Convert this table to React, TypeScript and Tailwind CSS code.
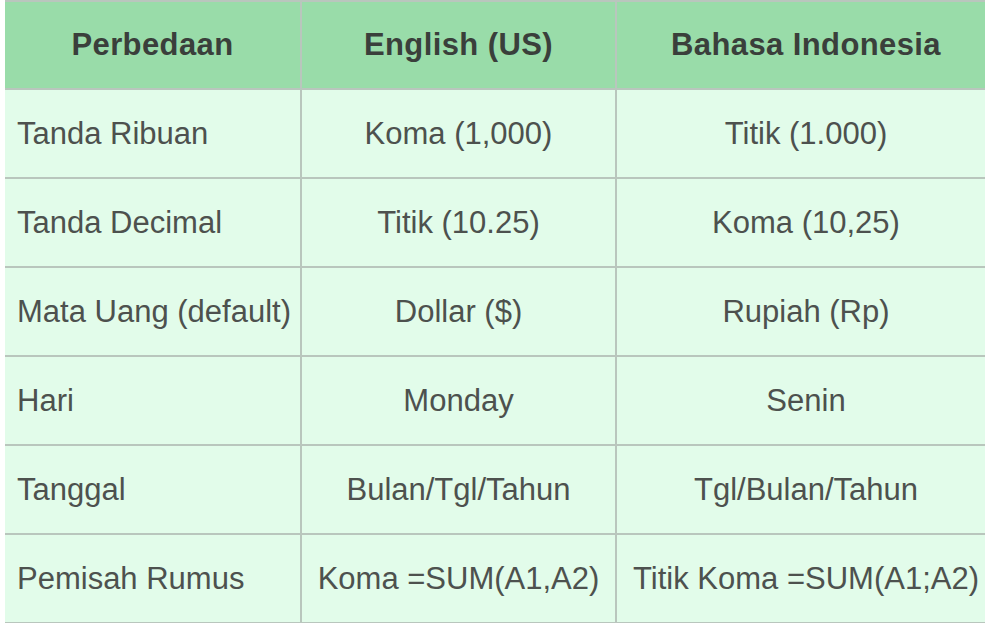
const rows: [string, string, string][] = [
  ["Tanda Ribuan", "Koma (1,000)", "Titik (1.000)"],
  ["Tanda Decimal", "Titik (10.25)", "Koma (10,25)"],
  ["Mata Uang (default)", "Dollar ($)", "Rupiah (Rp)"],
  ["Hari", "Monday", "Senin"],
  ["Tanggal", "Bulan/Tgl/Tahun", "Tgl/Bulan/Tahun"],
  ["Pemisah Rumus", "Koma =SUM(A1,A2)", "Titik Koma =SUM(A1;A2)"],
];

export default function App() {
  return (
    <div className="w-[985px] h-[623px] overflow-hidden bg-white pl-[5px] font-['Liberation_Sans',Arial,sans-serif]">
      <table className="table-fixed border-collapse w-[991px]">
        <colgroup>
          <col className="w-[296px]" />
          <col className="w-[315px]" />
          <col className="w-[380px]" />
        </colgroup>
        <thead>
          <tr className="bg-[#99dca9] h-[88px]">
            {["Perbedaan", "English (US)", "Bahasa Indonesia"].map((h) => (
              <th
                key={h}
                className="border-2 border-l-0 border-[#b9c6bd] text-center font-bold text-[31px] tracking-[0.4px] text-[#3a3f3b] px-3"
              >
                {h}
              </th>
            ))}
          </tr>
        </thead>
        <tbody>
          {rows.map((r) => (
            <tr key={r[0]} className="bg-[#e2fcea] h-[89px]">
              <td className="border-2 border-l-0 border-[#b9c6bd] px-3 pt-[2px] text-left text-[31px] text-[#4d514e] whitespace-nowrap">
                {r[0]}
              </td>
              <td className="border-2 border-[#b9c6bd] px-3 pt-[2px] text-center text-[31px] text-[#4d514e] whitespace-nowrap">
                {r[1]}
              </td>
              <td className="border-2 border-[#b9c6bd] px-3 pt-[2px] text-center text-[31px] text-[#4d514e] whitespace-nowrap">
                {r[2]}
              </td>
            </tr>
          ))}
        </tbody>
      </table>
    </div>
  );
}
